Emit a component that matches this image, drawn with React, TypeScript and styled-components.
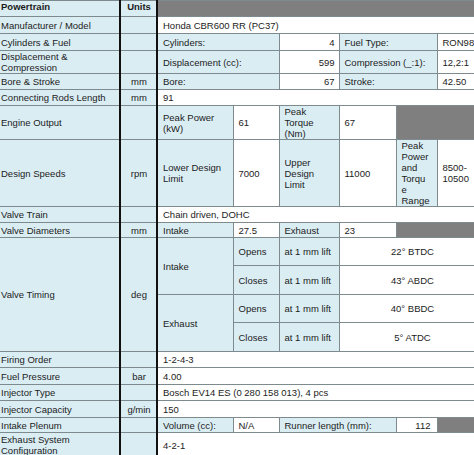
import styled, { createGlobalStyle } from "styled-components";

const GlobalStyle = createGlobalStyle`
  html, body {
    margin: 0;
    padding: 0;
    background: #ffffff;
    overflow: hidden;
  }
`;

type Kind = "label" | "unit" | "key" | "val" | "dark" | "head";

const colours: Record<Kind, string> = {
  label: "#daedf3",
  unit: "#daedf3",
  key: "#daedf3",
  val: "#ffffff",
  dark: "#7f7f7f",
  head: "#daedf3",
};

const Sheet = styled.table`
  border-collapse: collapse;
  table-layout: fixed;
  width: 485px;
  font-family: "Liberation Sans", Arial, sans-serif;
  font-size: 9.5px;
  line-height: 11px;
  color: #1c1c1c;
`;

const Row = styled.tr<{ $h: number }>`
  height: ${(p) => p.$h}px;
`;

const Cell = styled.td<{ $kind: Kind; $align?: "left" | "right" | "center" }>`
  background: ${(p) => colours[p.$kind]};
  border: 1px solid #7d8a8e;
  padding: 0 4px 0 5px;
  vertical-align: middle;
  text-align: ${(p) =>
    p.$align ?? (p.$kind === "unit" ? "center" : "left")};
  overflow: hidden;

  ${(p) =>
    (p.$kind === "label" || p.$kind === "head") &&
    `
    padding-left: 1px;
    border-left: none;
    border-right: 2px solid #111;
  `}
  ${(p) =>
    p.$kind === "unit" &&
    `
    border-right: 2px solid #111;
  `}
  ${(p) =>
    p.$kind === "head" &&
    `
    font-weight: bold;
    vertical-align: top;
  `}
`;

const HeadText = styled.span`
  display: block;
  margin-top: 0;
  font-weight: bold;
`;

const widths = [120, 37, 76, 46, 60, 57, 41, 48];

const lift = "at 1 mm lift";

export default function App() {
  return (
    <>
      <GlobalStyle />
      <Sheet>
        <colgroup>
          {widths.map((w, i) => (
            <col key={i} style={{ width: w }} />
          ))}
        </colgroup>
        <tbody>
          <Row $h={16}>
            <Cell $kind="head">
              <HeadText>Powertrain</HeadText>
            </Cell>
            <Cell $kind="unit" style={{ verticalAlign: "top" }}>
              <HeadText>Units</HeadText>
            </Cell>
            <Cell $kind="dark" colSpan={6} />
          </Row>

          <Row $h={17}>
            <Cell $kind="label">Manufacturer / Model</Cell>
            <Cell $kind="unit" />
            <Cell $kind="val" colSpan={6}>Honda CBR600 RR (PC37)</Cell>
          </Row>

          <Row $h={17}>
            <Cell $kind="label">Cylinders &amp; Fuel</Cell>
            <Cell $kind="unit" />
            <Cell $kind="key" colSpan={2}>Cylinders:</Cell>
            <Cell $kind="val" $align="right">4</Cell>
            <Cell $kind="key" colSpan={2}>Fuel Type:</Cell>
            <Cell $kind="val">RON98</Cell>
          </Row>

          <Row $h={23}>
            <Cell $kind="label">Displacement &amp; Compression</Cell>
            <Cell $kind="unit" />
            <Cell $kind="key" colSpan={2}>Displacement (cc):</Cell>
            <Cell $kind="val" $align="right">599</Cell>
            <Cell $kind="key" colSpan={2}>Compression (_:1):</Cell>
            <Cell $kind="val">12,2:1</Cell>
          </Row>

          <Row $h={16}>
            <Cell $kind="label">Bore &amp; Stroke</Cell>
            <Cell $kind="unit">mm</Cell>
            <Cell $kind="key" colSpan={2}>Bore:</Cell>
            <Cell $kind="val" $align="right">67</Cell>
            <Cell $kind="key" colSpan={2}>Stroke:</Cell>
            <Cell $kind="val">42.50</Cell>
          </Row>

          <Row $h={16}>
            <Cell $kind="label">Connecting Rods Length</Cell>
            <Cell $kind="unit">mm</Cell>
            <Cell $kind="val" colSpan={6}>91</Cell>
          </Row>

          <Row $h={32}>
            <Cell $kind="label">Engine Output</Cell>
            <Cell $kind="unit" />
            <Cell $kind="key">Peak Power (kW)</Cell>
            <Cell $kind="val">61</Cell>
            <Cell $kind="key">Peak Torque (Nm)</Cell>
            <Cell $kind="val">67</Cell>
            <Cell $kind="dark" colSpan={2} />
          </Row>

          <Row $h={66}>
            <Cell $kind="label">Design Speeds</Cell>
            <Cell $kind="unit">rpm</Cell>
            <Cell $kind="key">Lower Design Limit</Cell>
            <Cell $kind="val">7000</Cell>
            <Cell $kind="key">Upper Design Limit</Cell>
            <Cell $kind="val">11000</Cell>
            <Cell $kind="key">
              Peak
              <br />
              Power
              <br />
              and
              <br />
              Torqu
              <br />e<br />
              Range
            </Cell>
            <Cell $kind="val">8500-10500</Cell>
          </Row>

          <Row $h={16}>
            <Cell $kind="label">Valve Train</Cell>
            <Cell $kind="unit" />
            <Cell $kind="val" colSpan={6}>Chain driven, DOHC</Cell>
          </Row>

          <Row $h={15}>
            <Cell $kind="label">Valve Diameters</Cell>
            <Cell $kind="unit">mm</Cell>
            <Cell $kind="key">Intake</Cell>
            <Cell $kind="val">27.5</Cell>
            <Cell $kind="key">Exhaust</Cell>
            <Cell $kind="val">23</Cell>
            <Cell $kind="dark" colSpan={2} />
          </Row>

          <Row $h={28}>
            <Cell $kind="label" rowSpan={4}>Valve Timing</Cell>
            <Cell $kind="unit" rowSpan={4}>deg</Cell>
            <Cell $kind="key" rowSpan={2}>Intake</Cell>
            <Cell $kind="key">Opens</Cell>
            <Cell $kind="key">{lift}</Cell>
            <Cell $kind="val" colSpan={3} $align="center">22° BTDC</Cell>
          </Row>
          <Row $h={29}>
            <Cell $kind="key">Closes</Cell>
            <Cell $kind="key">{lift}</Cell>
            <Cell $kind="val" colSpan={3} $align="center">43° ABDC</Cell>
          </Row>
          <Row $h={28}>
            <Cell $kind="key" rowSpan={2}>Exhaust</Cell>
            <Cell $kind="key">Opens</Cell>
            <Cell $kind="key">{lift}</Cell>
            <Cell $kind="val" colSpan={3} $align="center">40° BBDC</Cell>
          </Row>
          <Row $h={29}>
            <Cell $kind="key">Closes</Cell>
            <Cell $kind="key">{lift}</Cell>
            <Cell $kind="val" colSpan={3} $align="center">5° ATDC</Cell>
          </Row>

          <Row $h={16}>
            <Cell $kind="label">Firing Order</Cell>
            <Cell $kind="unit" />
            <Cell $kind="val" colSpan={6}>1-2-4-3</Cell>
          </Row>

          <Row $h={17}>
            <Cell $kind="label">Fuel Pressure</Cell>
            <Cell $kind="unit">bar</Cell>
            <Cell $kind="val" colSpan={6}>4.00</Cell>
          </Row>

          <Row $h={16}>
            <Cell $kind="label">Injector Type</Cell>
            <Cell $kind="unit" />
            <Cell $kind="val" colSpan={6}>Bosch EV14 ES (0 280 158 013), 4 pcs</Cell>
          </Row>

          <Row $h={17}>
            <Cell $kind="label">Injector Capacity</Cell>
            <Cell $kind="unit">g/min</Cell>
            <Cell $kind="val" colSpan={6}>150</Cell>
          </Row>

          <Row $h={15}>
            <Cell $kind="label">Intake Plenum</Cell>
            <Cell $kind="unit" />
            <Cell $kind="key">Volume (cc):</Cell>
            <Cell $kind="val">N/A</Cell>
            <Cell $kind="key" colSpan={2}>Runner length (mm):</Cell>
            <Cell $kind="val" $align="right" style={{ paddingRight: 6 }}>112</Cell>
            <Cell $kind="dark" />
          </Row>

          <Row $h={25}>
            <Cell $kind="label">Exhaust System Configuration</Cell>
            <Cell $kind="unit" />
            <Cell $kind="val" colSpan={6}>4-2-1</Cell>
          </Row>
        </tbody>
      </Sheet>
    </>
  );
}
